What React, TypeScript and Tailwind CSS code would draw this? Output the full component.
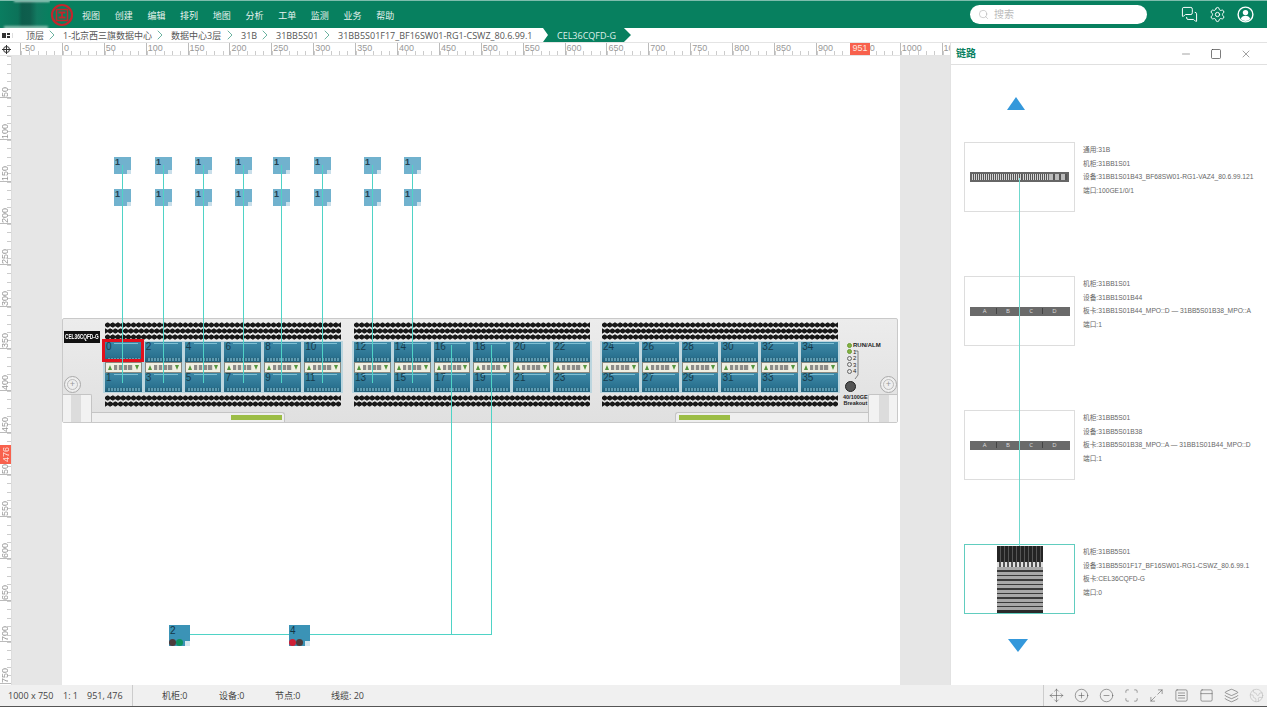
import { ChevronRight, CircleMinus, CirclePlus, Earth, Layers, Maximize2, MessagesSquare, Minus, Move, PanelTop, Scan, Search, Settings, Square, SquareMenu, X } from 'lucide-react';

const menu = ['视图', '创建', '编辑', '排列', '地图', '分析', '工单', '监测', '业务', '帮助'];

const crumbs = [
  { label: '顶层', width: 'w-[38px]' },
  { label: '1-北京西三旗数据中心', width: 'w-[108px]' },
  { label: '数据中心3层', width: 'w-[70px]' },
  { label: '31B', width: 'w-[35px]' },
  { label: '31BB5S01', width: 'w-[62px]' },
  { label: '31BB5S01F17_BF16SW01-RG1-CSWZ_80.6.99.1', width: 'w-[216px]' },
];

const hTicks = Array.from({ length: 23 }, (_, i) => (i - 1) * 50);
const vTicks = Array.from({ length: 15 }, (_, i) => (i + 1) * 50);

// x of each node on the page, minus the 62px page offset
const topNodes = [52, 93, 133, 173, 211, 252, 302, 342];

const portGroups = [
  { left: 'left-[40px]', start: 0 },
  { left: 'left-[289px]', start: 12 },
  { left: 'left-[537px]', start: 24 },
];

const panelItems = [
  {
    thumb: 'switch',
    lines: ['通用:31B', '机柜:31BB1S01', '设备:31BB1S01B43_BF68SW01-RG1-VAZ4_80.6.99.121', '端口:100GE1/0/1'],
  },
  {
    thumb: 'patch',
    lines: ['机柜:31BB1S01', '设备:31BB1S01B44', '板卡:31BB1S01B44_MPO::D — 31BB5S01B38_MPO::A', '端口:1'],
  },
  {
    thumb: 'patch',
    lines: ['机柜:31BB5S01', '设备:31BB5S01B38', '板卡:31BB5S01B38_MPO::A — 31BB1S01B44_MPO::D', '端口:1'],
  },
  {
    thumb: 'chassis',
    lines: ['机柜:31BB5S01', '设备:31BB5S01F17_BF16SW01-RG1-CSWZ_80.6.99.1', '板卡:CEL36CQFD-G', '端口:0'],
  },
];

function Logo() {
  return (
    <svg width="24" height="24" viewBox="0 0 24 24" fill="none" className="shrink-0">
      <circle cx="12" cy="12" r="10" stroke="#c4252c" strokeWidth="2.2" />
      <rect x="6.5" y="6.5" width="11" height="11" stroke="#c4252c" strokeWidth="1.6" />
      <path d="M8.5 9.5h7M8.5 14.5h7M12 9.5v5" stroke="#c4252c" strokeWidth="1.8" />
    </svg>
  );
}

function UserFilled() {
  return (
    <svg width="17" height="17" viewBox="0 0 17 17">
      <circle cx="8.5" cy="8.5" r="7.4" fill="none" stroke="#fff" strokeWidth="1.4" />
      <circle cx="8.5" cy="6.6" r="2.7" fill="#fff" />
      <path d="M3.8 13c.6-2.4 2.5-3.3 4.7-3.3s4.1.9 4.7 3.3a6.5 6.5 0 0 1-9.4 0z" fill="#fff" />
    </svg>
  );
}

function Header() {
  return (
    <header className="relative flex h-[28px] shrink-0 items-center border-t border-[#7dbdac] bg-[#07805f] text-white">
      <div className="absolute left-0 top-0 h-[27px] w-[50px] overflow-hidden bg-[linear-gradient(90deg,#0a7d60_0,#0c7259_18px,#0d5d4c_22px,#0f5f4e_30px,#127a61_37px,#07805f_50px)]">
        <div className="absolute left-[14px] top-[-2px] h-[3px] w-[36px] bg-[#a7cfc4] blur-[1px]" />
        <div className="absolute bottom-[-1px] left-[4px] h-[3px] w-[44px] bg-[#8cc2b3] blur-[1px]" />
      </div>
      <div className="ml-[50px] flex w-[32px] shrink-0">
        <Logo />
      </div>
      <nav className="mt-[1px] flex">
        {menu.map((m) => (
          <span key={m} className="w-[32.7px] text-[9px] leading-none text-[#e8f3ef]">{m}</span>
        ))}
      </nav>
      <div className="ml-auto mr-[34px] flex h-[19px] w-[177px] items-center rounded-full bg-white pl-[8px] text-[10px] text-[#bbb]">
        <Search size={11} strokeWidth={1.2} className="mr-[5px] text-[#aaa]" />
        搜索
      </div>
      <div className="mr-[13px] flex items-center gap-[11px]">
        <MessagesSquare size={17} strokeWidth={1.4} />
        <Settings size={17} strokeWidth={1.4} />
        <UserFilled />
      </div>
    </header>
  );
}

function Breadcrumb() {
  return (
    <div className="flex h-[14px] shrink-0 items-center bg-white text-[9px] text-[#555]">
      <div className="flex w-[13px] shrink-0 items-center justify-center border-r border-[#ddd]">
        <span className="flex items-center gap-px">
          <span className="h-[5px] w-[4px] bg-[#333]" />
          <span className="flex flex-col gap-px">
            <span className="h-[2px] w-[3px] bg-[#333]" />
            <span className="h-[2px] w-[3px] bg-[#333]" />
          </span>
        </span>
      </div>
      {crumbs.map((c, i) => (
        <div key={c.label} className={`relative flex h-full items-center ${c.width} ${i === 0 ? 'pl-[13px]' : 'pl-[12px]'}`}>
          <span className="whitespace-nowrap leading-none">{c.label}</span>
          {i < crumbs.length - 1 && (
            <ChevronRight size={16} strokeWidth={0.9} className="absolute right-[-9px] top-[-1px] text-[#07805f]" />
          )}
        </div>
      ))}
      <div className="ml-[1px] flex h-[14px] w-[88px] items-center bg-[#07805f] pl-[14px] leading-none text-[#dff0ea] [clip-path:polygon(0_0,92%_0,100%_50%,92%_100%,0_100%,5px_50%)]">
        CEL36CQFD-G
      </div>
    </div>
  );
}

function HorizontalRuler() {
  return (
    <div className="relative flex h-[14px] shrink-0 overflow-hidden border-y border-[#e4e4e4] bg-white font-['Liberation_Sans',sans-serif] text-[9px] text-[#999]">
      <div className="relative flex w-[13px] shrink-0 items-center justify-center text-[#333]">
        <span className="h-[7px] w-[7px] rounded-full border border-[#333]" />
        <span className="absolute left-[2px] top-[5.5px] h-px w-[9px] bg-[#333]" />
        <span className="absolute left-[6px] top-[1.5px] h-[9px] w-px bg-[#333]" />
      </div>
      <div className="flex pl-[7px]">
        {hTicks.map((t) => (
          <div
            key={t}
            className="w-[41.9px] shrink-0 border-l border-[#bbb] bg-[repeating-linear-gradient(90deg,#ccc_0,#ccc_1px,transparent_1px,transparent_8.38px)] bg-[length:100%_4px] bg-bottom bg-no-repeat pl-px leading-[10px]"
          >
            {t}
          </div>
        ))}
      </div>
      <div className="absolute left-[850px] top-0 flex h-full w-[20px] items-center justify-center bg-[#f8614d] text-[9px] text-[#fde4de]">951</div>
    </div>
  );
}

function VerticalRuler() {
  return (
    <div className="relative w-[12px] shrink-0 overflow-hidden border-r border-[#ddd] bg-white font-['Liberation_Sans',sans-serif] text-[9px] text-[#999]">
      {vTicks.map((t) => (
        <div
          key={t}
          className="flex h-[41.9px] items-end border-b border-[#bbb] bg-[repeating-linear-gradient(180deg,#ccc_0,#ccc_1px,transparent_1px,transparent_8.38px)] bg-[length:4px_100%] bg-right bg-no-repeat"
        >
          <span className="rotate-180 leading-[10px] [writing-mode:vertical-rl]">{t}</span>
        </div>
      ))}
      <div className="absolute left-0 top-[389px] flex h-[19px] w-[12px] items-center justify-center bg-[#f8614d] text-[#fde4de]">
        <span className="rotate-180 leading-[10px] [writing-mode:vertical-rl]">476</span>
      </div>
    </div>
  );
}

function SmallNode({ x, y }: { x: number; y: number }) {
  return (
    <div className="absolute h-[17px] w-[17px] bg-[#71b2ce] font-['Liberation_Sans',sans-serif] text-[9px] font-bold leading-[11px] text-[#24404f]" style={{ left: x, top: y }}>
      <span className="pl-px">1</span>
      <span className="absolute bottom-0 right-0 h-[4px] w-[4px] bg-[#c9dfea]" />
    </div>
  );
}

function BottomNode({ x, label, leds }: { x: number; label: string; leds: string[] }) {
  return (
    <div className="absolute top-[569px] h-[21px] w-[21px] bg-[#3b93b6] font-['Liberation_Sans',sans-serif] text-[10px] leading-[12px] text-[#143545]" style={{ left: x }}>
      <span className="pl-px">{label}</span>
      <div className="absolute bottom-0 left-0 flex">
        {leds.map((c, i) => (
          <span key={i} className="h-[7px] w-[7px] rounded-full" style={{ background: c }} />
        ))}
      </div>
      <span className="absolute bottom-0 right-0 h-[5px] w-[5px] bg-[#d7e8f0]" />
    </div>
  );
}

function Holes({ rows, className }: { rows: number; className: string }) {
  return (
    <div className={`absolute flex flex-col ${className}`}>
      {Array.from({ length: rows }, (_, i) => (
        <div
          key={i}
          className={`h-[6px] bg-[radial-gradient(circle,#191919_2.3px,transparent_2.8px)] bg-[length:5.2px_6px] ${i % 2 ? 'bg-[position:2.6px_0]' : 'bg-[position:0_0]'}`}
        />
      ))}
    </div>
  );
}

function PortCell({ n, short }: { n: number; short?: boolean }) {
  return (
    <div className={`relative w-full bg-[linear-gradient(180deg,#3d88a6,#2b7391_70%,#215f79)] font-['Liberation_Sans',sans-serif] text-[10px] leading-[10px] text-[#183b4b] ${short ? 'h-[19px]' : 'h-[20px]'}`}>
      <span className="absolute left-px top-0">{n}</span>
      <span className="absolute left-[9px] right-[4px] top-[1px] h-px bg-[#7fc0d4]" />
      <span className="absolute inset-x-[2px] bottom-[1px] h-[3px] bg-[repeating-linear-gradient(90deg,#2a5f75_0,#2a5f75_1px,#5c9cb3_1px,#5c9cb3_3px)]" />
    </div>
  );
}

function PortStrip() {
  return (
    <div className="flex h-[11px] items-center justify-between border border-[#8a8a80] bg-[#f0efe2] px-[2px]">
      <span className="h-0 w-0 border-x-[2.5px] border-b-[5px] border-x-transparent border-b-[#57963f]" />
      <span className="h-[5px] w-[19px] bg-[repeating-linear-gradient(90deg,#8c8c88_0,#8c8c88_3.4px,#dedcd0_3.4px,#dedcd0_4.8px)]" />
      <span className="h-0 w-0 border-x-[2.5px] border-t-[5px] border-x-transparent border-t-[#57963f]" />
    </div>
  );
}

function PortGroup({ left, start }: { left: string; start: number }) {
  return (
    <div className={`absolute top-[22px] grid w-[240px] grid-cols-6 gap-x-[3px] bg-[#bcd6df] px-[2px] py-px ${left}`}>
      {[0, 1, 2, 3, 4, 5].map((i) => (
        <div key={i} className="flex min-w-0 flex-col">
          <PortCell n={start + i * 2} />
          <PortStrip />
          <PortCell n={start + i * 2 + 1} short />
        </div>
      ))}
    </div>
  );
}

function Screw({ left }: { left: string }) {
  return (
    <div className={`absolute top-[57px] flex h-[17px] w-[17px] items-center justify-center rounded-full border border-[#aaa] bg-[#eee] text-[9px] leading-none text-[#999] ${left}`}>
      <span className="flex h-[11px] w-[11px] items-center justify-center rounded-full border border-[#bbb]">+</span>
    </div>
  );
}

function Led({ on, label }: { on?: boolean; label: string }) {
  return (
    <div className="flex h-[6px] items-center gap-px">
      <span className={`h-[5px] w-[5px] rounded-full border ${on ? 'border-[#6a9a35] bg-[#84b340]' : 'border-[#666] bg-transparent'}`} />
      <span className="text-[6px] leading-none text-[#222]">{label}</span>
    </div>
  );
}

function Board() {
  return (
    <div className="absolute left-0 top-[262px] h-[105px] w-[836px] rounded-[2px] border border-[#c9c9c9] bg-[linear-gradient(180deg,#ececec,#e0e0e0)] font-['Liberation_Sans',sans-serif]">
      <div className="absolute left-[1px] top-[12px] h-[12px] w-[36px] overflow-hidden bg-[#111] pl-px">
        <span className="block origin-left scale-x-[.68] whitespace-nowrap text-[7px] font-bold leading-[12px] text-white">CEL36CQFD-G</span>
      </div>

      <Holes rows={3} className="left-[42px] top-[3px] w-[236px]" />
      <Holes rows={3} className="left-[291px] top-[3px] w-[236px]" />
      <Holes rows={3} className="left-[539px] top-[3px] w-[236px]" />
      <Holes rows={2} className="left-[42px] top-[76px] w-[236px]" />
      <Holes rows={2} className="left-[291px] top-[76px] w-[236px]" />
      <Holes rows={2} className="left-[539px] top-[76px] w-[236px]" />

      {portGroups.map((g) => (
        <PortGroup key={g.start} left={g.left} start={g.start} />
      ))}

      {/* selected port */}
      <div className="absolute left-[39px] top-[20px] h-[23px] w-[42px] border-[3px] border-[#e2101c]" />

      <Screw left="left-[1px]" />
      <Screw left="left-[817px]" />

      <div className="absolute left-[784px] top-[23px] flex flex-col gap-[.5px]">
        <div className="flex h-[6px] items-center gap-px">
          <span className="h-[5px] w-[5px] rounded-full border border-[#6a9a35] bg-[#84b340]" />
          <span className="text-[6px] font-bold leading-none text-[#222]">RUN/ALM</span>
        </div>
        <Led on label="1" />
        <Led label="2" />
        <Led label="3" />
        <Led label="4" />
      </div>
      <svg width="10" height="32" viewBox="0 0 10 32" fill="none" className="absolute left-[789px] top-[30px]">
        <path d="M3 2h3v24l-3 4" stroke="#555" strokeWidth=".7" />
      </svg>
      <div className="absolute left-[782px] top-[62px] h-[11px] w-[11px] rounded-full border border-[#222] bg-[#555]" />
      <div className="absolute left-[780px] top-[75px] text-center text-[5.5px] font-bold leading-[6px] text-[#222]">
        40/100GE
        <br />
        Breakout
      </div>

      {/* bottom pull handles */}
      <div className="absolute bottom-0 left-[29px] h-[10px] w-[193px] rounded-tr-[3px] border-r border-t border-[#c4c4c4] bg-[#efefef]">
        <div className="absolute left-[139px] top-[2px] h-[5px] w-[51px] bg-[#9cbd46]" />
      </div>
      <div className="absolute bottom-0 left-[612px] h-[10px] w-[193px] rounded-tl-[3px] border-l border-t border-[#c4c4c4] bg-[#efefef]">
        <div className="absolute left-[3px] top-[2px] h-[5px] w-[51px] bg-[#9cbd46]" />
      </div>
      <div className="absolute bottom-0 left-0 h-[28px] w-[29px] rounded-tr-[2px] border-r border-t border-[#c4c4c4] bg-[linear-gradient(90deg,#f2f2f2_0,#f2f2f2_30%,#dcdcdc_30%,#dcdcdc_65%,#f2f2f2_65%)]" />
      <div className="absolute bottom-0 right-0 h-[28px] w-[29px] rounded-tl-[2px] border-l border-t border-[#c4c4c4] bg-[linear-gradient(270deg,#f2f2f2_0,#f2f2f2_30%,#dcdcdc_30%,#dcdcdc_65%,#f2f2f2_65%)]" />
    </div>
  );
}

function Canvas() {
  return (
    <div className="relative flex-1 overflow-hidden bg-[#e6e6e6]">
      <div className="absolute inset-y-0 left-[50px] w-[838px] bg-white">
        {topNodes.map((x) => (
          <div key={x}>
            <SmallNode x={x} y={101} />
            <SmallNode x={x} y={133} />
          </div>
        ))}
        <Board />
        {/* cables */}
        {topNodes.map((x) => (
          <div key={x} className="absolute top-[109px] h-[218px] w-px bg-[#4fd3c6]" style={{ left: x + 8 }} />
        ))}
        <div className="absolute left-[389px] top-[289px] h-[290px] w-px bg-[#4fd3c6]" />
        <div className="absolute left-[429px] top-[289px] h-[290px] w-px bg-[#4fd3c6]" />
        <div className="absolute left-[128px] top-[578px] h-px w-[301px] bg-[#4fd3c6]" />
        <BottomNode x={107} label="2" leds={['#4d3b3b', '#0d9160']} />
        <BottomNode x={227} label="4" leds={['#d01f36', '#4d3b3b']} />
      </div>
    </div>
  );
}

function SwitchThumb() {
  return (
    <div className="flex h-[10px] w-[99px] items-center gap-px bg-[#666] px-[2px]">
      <div className="h-[6px] flex-1 bg-[repeating-linear-gradient(90deg,#d5d5d5_0,#d5d5d5_1px,#555_1px,#555_2px)]" />
      <div className="h-[6px] flex-1 bg-[repeating-linear-gradient(90deg,#d5d5d5_0,#d5d5d5_1px,#555_1px,#555_2px)]" />
      <div className="h-[6px] flex-1 bg-[repeating-linear-gradient(90deg,#d5d5d5_0,#d5d5d5_1px,#555_1px,#555_2px)]" />
      <div className="h-[6px] w-[18px] bg-[repeating-linear-gradient(90deg,#bbb_0,#bbb_4px,#555_4px,#555_6px)]" />
    </div>
  );
}

function PatchThumb() {
  return (
    <div className="flex h-[9px] w-[100px] items-center bg-[#6a6a6a] px-[4px] text-[6px] leading-none text-[#ddd]">
      {['A', 'B', 'C', 'D'].map((l) => (
        <span key={l} className="flex-1 border-r border-[#444] text-center last:border-r-0">{l}</span>
      ))}
    </div>
  );
}

function ChassisThumb() {
  return (
    <div className="flex h-[67px] w-[46px] flex-col bg-[#8f8f8f]">
      <div className="h-[16px] bg-[repeating-linear-gradient(90deg,#242424_0,#242424_3px,#555_3px,#555_4px)]" />
      <div className="h-[5px] bg-[repeating-linear-gradient(90deg,#e0e0e0_0,#e0e0e0_2px,#555_2px,#555_4px)]" />
      <div className="flex-1 bg-[repeating-linear-gradient(180deg,#a8a8a8_0,#a8a8a8_3px,#3a3a3a_3px,#3a3a3a_4.5px)]" />
      <div className="h-[3px] bg-[#2a2a2a]" />
    </div>
  );
}

function LinkPanel() {
  return (
    <aside className="relative flex w-[317px] shrink-0 flex-col border-l border-t border-[#e2e2e2] bg-white">
      <div className="flex h-[22px] shrink-0 items-center border-b border-[#e0e0e0] pl-[5px] text-[10px] font-semibold text-[#07805f]">
        链路
        <div className="ml-auto flex items-center gap-[18px] pr-[15px] text-[#444]">
          <Minus size={12} strokeWidth={1} />
          <Square size={12} strokeWidth={1.4} />
          <X size={12} strokeWidth={1} />
        </div>
      </div>

      <div className="absolute left-[68px] top-[135px] z-10 h-[368px] w-px bg-[#6fd8cd]" />

      <div className="ml-[56px] mt-[32px] h-0 w-0 border-x-[9.5px] border-b-[13px] border-x-transparent border-b-[#3498db]" />

      <div className="relative mt-[32px] flex flex-col gap-[64px] pl-[13px]">
        {panelItems.map((item, i) => (
          <div key={i} className="flex items-start gap-[8px]">
            <div className={`flex h-[70px] w-[111px] items-center justify-center border ${item.thumb === 'chassis' ? 'border-[#61cdbf]' : 'border-[#ddd]'}`}>
              {item.thumb === 'switch' && <SwitchThumb />}
              {item.thumb === 'patch' && <PatchThumb />}
              {item.thumb === 'chassis' && <ChassisThumb />}
            </div>
            <div className="flex flex-col gap-[4.5px] pt-[3px] font-['Liberation_Sans','Noto_Sans_CJK_SC',sans-serif] text-[6.7px] leading-[9px] text-[#666]">
              {item.lines.map((l) => (
                <span key={l} className="whitespace-nowrap">{l}</span>
              ))}
            </div>
          </div>
        ))}
      </div>

      <div className="ml-[57px] mt-[25px] h-0 w-0 border-x-[10px] border-t-[13px] border-x-transparent border-t-[#3498db]" />
    </aside>
  );
}

function StatusBar() {
  const icons = [Move, CirclePlus, CircleMinus, Scan, Maximize2, SquareMenu, PanelTop, Layers];
  return (
    <footer className="flex h-[22px] shrink-0 items-center border-b border-[#555] bg-[#f0f0f0] text-[9px] text-[#444]">
      <div className="flex h-full w-[133px] items-center border-r border-[#ccc] pl-[8px]">
        <span className="w-[55px]">1000 x 750</span>
        <span className="w-[24px]">1: 1</span>
        <span>951, 476</span>
      </div>
      <div className="flex pl-[29px]">
        <span className="w-[57px]">机柜:0</span>
        <span className="w-[56px]">设备:0</span>
        <span className="w-[56px]">节点:0</span>
        <span>线缆: 20</span>
      </div>
      <div className="ml-auto flex h-full items-center gap-[10px] border-l border-[#ccc] pl-[5px] pr-[3px] text-[#555]">
        {icons.map((Icon, i) => (
          <Icon key={i} size={15} strokeWidth={0.9} />
        ))}
        <Earth size={15} strokeWidth={1} className="text-[#bbb]" />
      </div>
    </footer>
  );
}

export default function App() {
  return (
    <div className="flex h-[707px] w-[1267px] flex-col overflow-hidden bg-white font-['Open_Sans','Noto_Sans_CJK_SC',sans-serif]">
      <Header />
      <Breadcrumb />
      <div className="flex min-h-0 flex-1">
        <div className="flex w-[950px] shrink-0 flex-col">
          <HorizontalRuler />
          <div className="flex min-h-0 flex-1">
            <VerticalRuler />
            <Canvas />
          </div>
        </div>
        <LinkPanel />
      </div>
      <StatusBar />
    </div>
  );
}
